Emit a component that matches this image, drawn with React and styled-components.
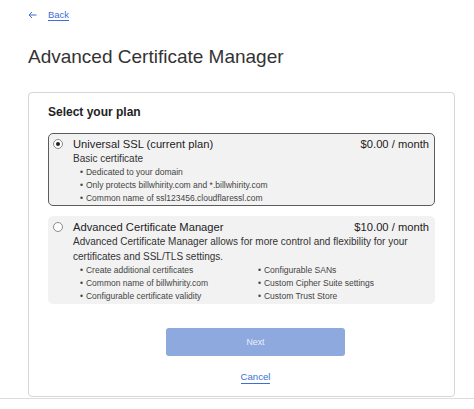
import React, { useState } from "react";
import styled, { createGlobalStyle } from "styled-components";

const GlobalStyle = createGlobalStyle`
  body {
    margin: 0;
    background: #ffffff;
    font-family: "Liberation Sans", Arial, sans-serif;
    color: #222222;
  }
`;

const Page = styled.div`
  padding: 0 19px 0 28px;
  border-bottom: 1px solid #dddddd;
  height: 399px;
  box-sizing: border-box;
`;

const BackLink = styled.a`
  display: flex;
  align-items: center;
  gap: 11px;
  padding-top: 8px;
  height: 14px;
  font-size: 9.5px;
  color: #3d6fd4;
  text-decoration: none;
  cursor: pointer;

  span {
    border-bottom: 1px solid #3d6fd4;
    line-height: 11px;
  }
`;

const Heading = styled.h1`
  margin: 23px 0 0;
  font-size: 19px;
  line-height: 24px;
  font-weight: 400;
  color: #333333;
`;

const Card = styled.div`
  margin-top: 23px;
  border: 1px solid #d6d6d6;
  border-radius: 4px;
  padding: 10px 19px 0;
  height: 305px;
  box-sizing: border-box;
`;

const CardTitle = styled.h2`
  margin: 0 0 12px;
  font-size: 12px;
  line-height: 18px;
  font-weight: 700;
  color: #222222;
`;

const PlanList = styled.div`
  display: flex;
  flex-direction: column;
  gap: 10px;
`;

const Plan = styled.label`
  display: grid;
  grid-template-columns: 24px 1fr;
  padding: 3px 5px 0 0;
  background: #f2f2f2;
  border: 1px solid ${(p) => (p.$selected ? "#5c5c5c" : "#f2f2f2")};
  border-radius: 5px;
  cursor: pointer;
`;

const Radio = styled.span`
  justify-self: start;
  margin: 2px 0 0 4px;
  width: 10px;
  height: 10px;
  border-radius: 50%;
  border: 1px solid #8a8a8a;
  background: #ffffff;
  box-sizing: border-box;
  display: flex;
  align-items: center;
  justify-content: center;

  &::after {
    content: "";
    width: 4px;
    height: 4px;
    border-radius: 50%;
    background: ${(p) => (p.$checked ? "#222222" : "transparent")};
  }
`;

const PlanBody = styled.div`
  display: flex;
  flex-direction: column;
`;

const PlanHead = styled.div`
  display: flex;
  justify-content: space-between;
  font-size: 11.2px;
  line-height: 14px;
  color: #222222;
`;

const PlanText = styled.div`
  font-size: 10px;
  line-height: 15px;
  color: #333333;
  padding-right: 12px;
`;

const Bullets = styled.ul`
  margin: 0;
  padding: 0 0 0 7px;
  list-style: none;
  display: grid;
  grid-template-columns: ${(p) => (p.$columns === 2 ? "178px 1fr" : "1fr")};
  grid-auto-flow: ${(p) => (p.$columns === 2 ? "column" : "row")};
  grid-template-rows: ${(p) => (p.$columns === 2 ? "repeat(3, 13px)" : "none")};
`;

const Bullet = styled.li`
  font-size: 8.5px;
  line-height: 13px;
  color: #444444;
  white-space: nowrap;

  &::before {
    content: "•";
    margin-right: 3px;
  }
`;

const Actions = styled.div`
  display: flex;
  flex-direction: column;
  align-items: center;
  padding-left: 28px;
  margin-top: 24px;
`;

const NextButton = styled.button`
  width: 179px;
  height: 28px;
  border: none;
  border-radius: 3px;
  background: #8ea9de;
  color: #e9eefa;
  font-family: inherit;
  font-size: 8.8px;
  cursor: not-allowed;
`;

const CancelLink = styled.a`
  margin-top: 15px;
  font-size: 9.6px;
  line-height: 12px;
  color: #3d6fd4;
  text-decoration: none;
  border-bottom: 1px solid #3d6fd4;
  cursor: pointer;
`;

const plans = [
  {
    id: "universal",
    name: "Universal SSL (current plan)",
    price: "$0.00 / month",
    text: "Basic certificate",
    columns: 1,
    bullets: [
      "Dedicated to your domain",
      "Only protects billwhirity.com and *.billwhirity.com",
      "Common name of ssl123456.cloudflaressl.com",
    ],
  },
  {
    id: "acm",
    name: "Advanced Certificate Manager",
    price: "$10.00 / month",
    text: "Advanced Certificate Manager allows for more control and flexibility for your certificates and SSL/TLS settings.",
    columns: 2,
    bullets: [
      "Create additional certificates",
      "Common name of billwhirity.com",
      "Configurable certificate validity",
      "Configurable SANs",
      "Custom Cipher Suite settings",
      "Custom Trust Store",
    ],
  },
];

const BackArrow = () => (
  <svg width="9" height="8" viewBox="0 0 9 8" fill="none">
    <path d="M8.5 4H1M4 1L1 4l3 3" stroke="#3d6fd4" strokeWidth="1" />
  </svg>
);

export default function App() {
  const [selected, setSelected] = useState("universal");

  return (
    <>
      <GlobalStyle />
      <Page>
        <BackLink>
          <BackArrow />
          <span>Back</span>
        </BackLink>
        <Heading>Advanced Certificate Manager</Heading>
        <Card>
          <CardTitle>Select your plan</CardTitle>
          <PlanList>
            {plans.map((plan) => (
              <Plan
                key={plan.id}
                $selected={selected === plan.id}
                onClick={() => setSelected(plan.id)}
              >
                <Radio $checked={selected === plan.id} />
                <PlanBody>
                  <PlanHead>
                    <span>{plan.name}</span>
                    <span>{plan.price}</span>
                  </PlanHead>
                  <PlanText>{plan.text}</PlanText>
                  <Bullets $columns={plan.columns}>
                    {plan.bullets.map((b) => (
                      <Bullet key={b}>{b}</Bullet>
                    ))}
                  </Bullets>
                </PlanBody>
              </Plan>
            ))}
          </PlanList>
          <Actions>
            <NextButton disabled>Next</NextButton>
            <CancelLink>Cancel</CancelLink>
          </Actions>
        </Card>
      </Page>
    </>
  );
}
